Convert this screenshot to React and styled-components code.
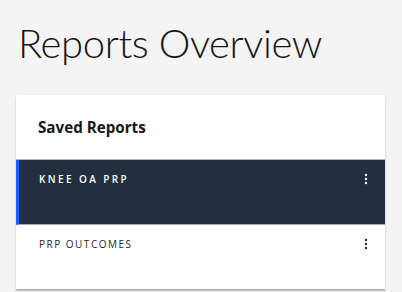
import React from "react";
import styled, { createGlobalStyle } from "styled-components";

const Global = createGlobalStyle`
  html, body { margin: 0; padding: 0; background: #f4f4f4; }
  body { font-family: "Lato", "Noto Sans", sans-serif; }
`;

const Page = styled.div`
  padding: 17px 17px 0 16px;
  height: 292px;
  box-sizing: border-box;
  overflow: hidden;
`;

const Title = styled.h1`
  margin: 0 0 0 2px;
  font-family: "Lato", sans-serif;
  font-weight: 300;
  font-size: 40px;
  line-height: 52px;
  color: #161616;
  letter-spacing: -0.4px;
`;

const Card = styled.section`
  margin-top: 26px;
  background: #fff;
  border-radius: 3px 3px 0 0;
  box-shadow: 0 1px 2px rgba(0, 0, 0, 0.25);
`;

const CardHeader = styled.div`
  height: 64px;
  padding: 0 22px;
  display: flex;
  align-items: center;
  border-bottom: 1px solid #b8b8b8;
  font-family: "Open Sans", sans-serif;
  font-weight: 700;
  font-size: 15.2px;
  color: #161616;
`;

const Row = styled.div`
  height: 65px;
  display: flex;
  align-items: flex-start;
  justify-content: space-between;
  padding: 11px 17px 0 ${(p) => (p.$active ? 20 : 23)}px;
  box-sizing: border-box;
  background: ${(p) => (p.$active ? "#232e3f" : "#fff")};
  color: ${(p) => (p.$active ? "#fff" : "#262626")};
  border-left: ${(p) => (p.$active ? "3px solid #0f62fe" : "none")};
  border-bottom: 1px solid #a8a8a8;
`;

const RowLabel = styled.span`
  font-family: "Open Sans", sans-serif;
  font-weight: ${(p) => (p.$active ? 600 : 400)};
  font-size: 10px;
  letter-spacing: ${(p) => (p.$active ? 2.4 : 1.5)}px;
  line-height: 16px;
`;

const Kebab = styled.svg`
  width: 4px;
  height: 12px;
  margin-top: 2px;
  fill: currentColor;
`;

const Dots = () => (
  <Kebab viewBox="0 0 4 12">
    <circle cx="2" cy="2" r="1.2" />
    <circle cx="2" cy="6" r="1.2" />
    <circle cx="2" cy="10" r="1.2" />
  </Kebab>
);

const reports = [
  { name: "KNEE OA PRP", active: true },
  { name: "PRP OUTCOMES", active: false },
];

export default function App() {
  return (
    <>
      <Global />
      <Page>
        <Title>Reports Overview</Title>
        <Card>
          <CardHeader>Saved Reports</CardHeader>
          {reports.map((r) => (
            <Row key={r.name} $active={r.active}>
              <RowLabel $active={r.active}>{r.name}</RowLabel>
              <Dots />
            </Row>
          ))}
        </Card>
      </Page>
    </>
  );
}
